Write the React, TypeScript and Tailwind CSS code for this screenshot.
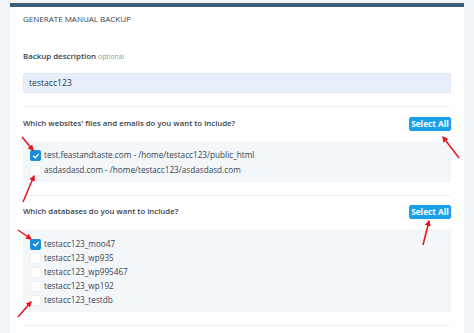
import React from 'react';

const websites = [
  { id: 'w1', label: 'test.feastandtaste.com - /home/testacc123/public_html', checked: true },
  { id: 'w2', label: 'asdasdasd.com - /home/testacc123/asdasdasd.com', checked: false },
];

const databases = [
  { id: 'd1', label: 'testacc123_moo47', checked: true },
  { id: 'd2', label: 'testacc123_wp935', checked: false },
  { id: 'd3', label: 'testacc123_wp995467', checked: false },
  { id: 'd4', label: 'testacc123_wp192', checked: false },
  { id: 'd5', label: 'testacc123_testdb', checked: false },
];

// red annotation arrows drawn over the screenshot
const arrows = [
  { x1: 22, y1: 137, x2: 33, y2: 150 },
  { x1: 23, y1: 202, x2: 34, y2: 176 },
  { x1: 459, y1: 158, x2: 443, y2: 137 },
  { x1: 18, y1: 230, x2: 31, y2: 239 },
  { x1: 18, y1: 317, x2: 31, y2: 302 },
  { x1: 423, y1: 245, x2: 429, y2: 221 },
];

function Checkbox({ checked }: { checked: boolean }) {
  if (checked) {
    return (
      <span className="flex h-[11px] w-[11px] shrink-0 items-center justify-center rounded-[2px] bg-[#1a8fd8]">
        <svg viewBox="0 0 10 10" className="h-[8px] w-[8px]">
          <path d="M2 5.2 L4.2 7.2 L8 3" fill="none" stroke="#fff" strokeWidth="1.6" strokeLinecap="round" strokeLinejoin="round" />
        </svg>
      </span>
    );
  }
  return <span className="h-[11px] w-[11px] shrink-0 rounded-[2px] border border-[#eef1f4] bg-white" />;
}

function SectionHeader({ title }: { title: string }) {
  return (
    <div className="flex h-[14px] items-center justify-between">
      <span className="text-[7.8px] font-semibold text-[#37434f]">{title}</span>
      <button className="flex h-[14px] w-[42px] items-center justify-center rounded-[2px] bg-[#1aa0e8] text-[8.3px] font-bold text-white">
        Select All
      </button>
    </div>
  );
}

function Divider() {
  return <div className="h-px bg-[#eef2f5]" />;
}

export default function App() {
  return (
    <div className="relative h-[333px] w-[474px] overflow-hidden bg-[#f2f5f7] pt-[3px] font-['Open_Sans',sans-serif]">
      <div className="ml-[10px] h-[330px] w-[454px] border-t-4 border-[#3e5e77] bg-white px-[13px]">
        <div className="flex h-[24px] items-center text-[8px] uppercase text-[#37434f]">Generate Manual Backup</div>

        <div className="mt-[18px] flex h-[16px] items-center gap-[2px]">
          <span className="text-[7.9px] font-semibold text-[#37434f]">Backup description</span>
          <span className="text-[6.8px] text-[#8c98a4]">optional</span>
        </div>
        <div className="mt-[8px] flex h-[20px] items-center rounded-[2px] border border-[#e1e8f2] bg-[#e8effb] px-[5px] text-[8.6px] text-[#2f3a46]">
          testacc123
        </div>

        <div className="mt-[13px]">
          <Divider />
        </div>

        <div className="mt-[10px]">
          <SectionHeader title="Which websites' files and emails do you want to include?" />
        </div>
        <div className="mt-[10px] bg-[#f4f7f9] px-[7px] pb-[4px] pt-[7px]">
          {websites.map((w) => (
            <div key={w.id} className="flex h-[15px] items-center gap-[3px]">
              <Checkbox checked={w.checked} />
              <span className="text-[8.2px] text-[#37434f]">{w.label}</span>
            </div>
          ))}
        </div>

        <div className="mt-[13px]">
          <Divider />
        </div>

        <div className="mt-[9px]">
          <SectionHeader title="Which databases do you want to include?" />
        </div>
        <div className="mt-[10px] bg-[#f4f7f9] px-[7px] pb-[5px] pt-[8px]">
          {databases.map((d) => (
            <div key={d.id} className="flex h-[14px] items-center gap-[3px]">
              <Checkbox checked={d.checked} />
              <span className="text-[8.2px] text-[#37434f]">{d.label}</span>
            </div>
          ))}
        </div>

        <div className="mt-[13px]">
          <Divider />
        </div>
      </div>

      <svg className="pointer-events-none absolute inset-0" width="474" height="333" viewBox="0 0 474 333">
        <defs>
          <marker id="head" viewBox="0 0 10 10" refX="8" refY="5" markerWidth="4" markerHeight="4" orient="auto-start-reverse">
            <path d="M0 0 L10 5 L0 10 z" fill="#e3151b" />
          </marker>
        </defs>
        {arrows.map((a, i) => (
          <line
            key={i}
            x1={a.x1}
            y1={a.y1}
            x2={a.x2}
            y2={a.y2}
            stroke="#e3151b"
            strokeWidth="1.5"
            markerEnd="url(#head)"
          />
        ))}
      </svg>
    </div>
  );
}
